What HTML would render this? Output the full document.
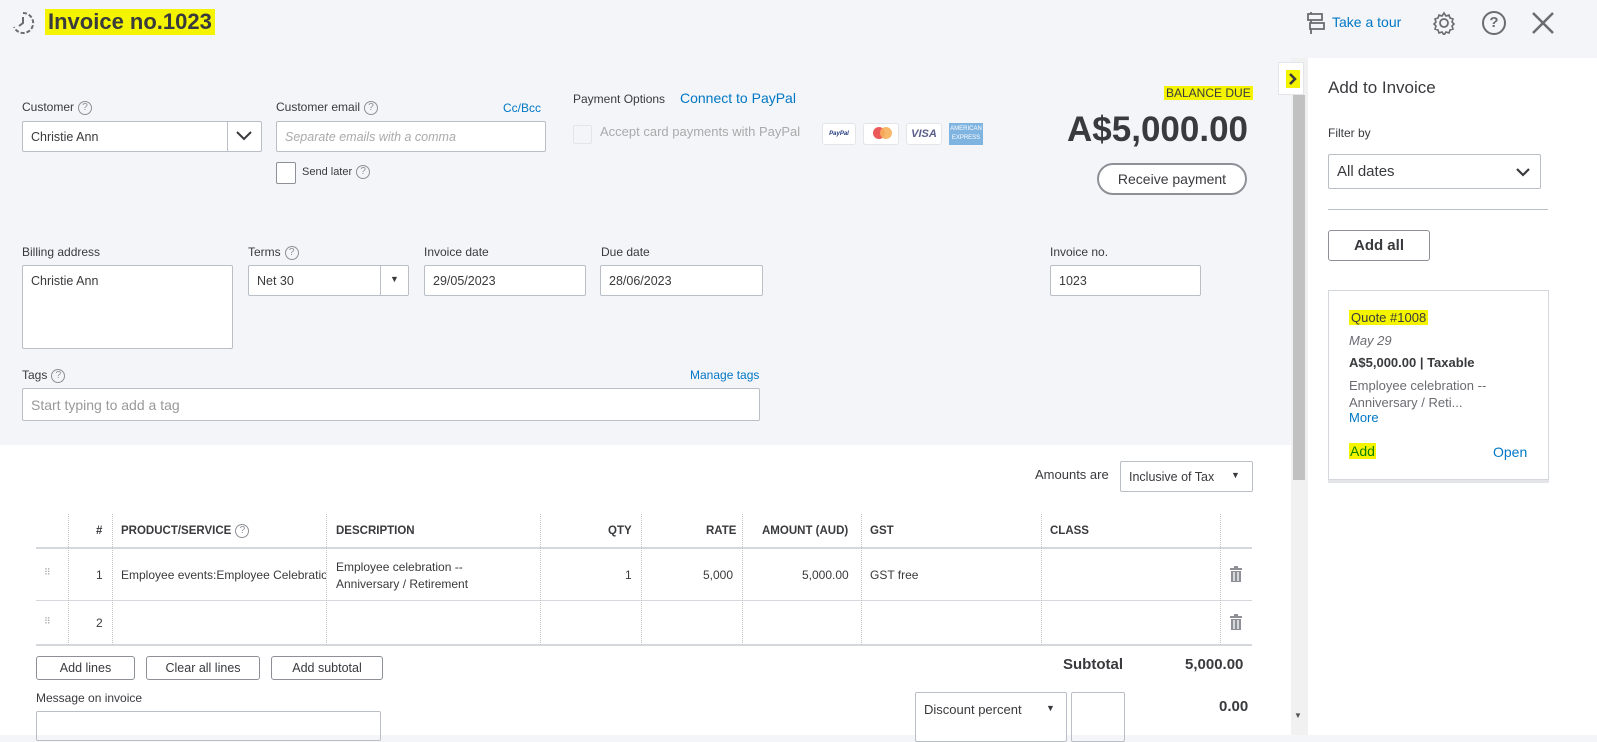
<!DOCTYPE html>
<html><head><style>
*{box-sizing:border-box;margin:0;padding:0}
body{width:1597px;height:735px;overflow:hidden;background:#f4f5f8;font-family:"Liberation Sans",sans-serif;color:#393a3d;position:relative;font-size:12px}
.a{position:absolute}
.lbl{font-size:12px;color:#393a3d}
.inp{position:absolute;background:#fff;border:1px solid #babec5;border-radius:2px;font-size:12.5px;padding:0 8px;display:flex;align-items:center}
.q{display:inline-block;width:14px;height:14px;border:1px solid #8d9096;border-radius:50%;font-size:10px;text-align:center;line-height:12px;color:#8d9096;vertical-align:middle;margin-left:4px}
.blue{color:#0077c5}
.btn{position:absolute;background:#fff;border:1px solid #8d9096;border-radius:3px;font-size:12.5px;text-align:center;color:#393a3d}
.hl{background:#f4f400}
.th{position:absolute;top:514px;height:34px;line-height:34px;font-size:11.5px;font-weight:bold;color:#393a3d}
.vl{position:absolute;border-left:1px dotted #c4c4c4}
.cell{position:absolute;font-size:12px}
.card{position:absolute;width:30px;height:22px;background:#fff;border:1px solid #e3e5e8;border-radius:3px;font-size:8px;text-align:center;line-height:20px}
</style></head><body>
<!-- header -->
<svg class="a" style="left:10px;top:10px" width="26" height="26" viewBox="0 0 26 26"><path d="M13 3a10 10 0 1 1-9 14" fill="none" stroke="#6b6c72" stroke-width="2" stroke-dasharray="4 2"/><path d="M13 7v6l-4 3" fill="none" stroke="#6b6c72" stroke-width="2"/></svg>
<div class="a hl" style="left:45px;top:9px;font-size:22px;font-weight:bold;padding:0 3px;color:#393a3d">Invoice no.1023</div>
<svg class="a" style="left:1305px;top:11px" width="22" height="24" viewBox="0 0 22 24"><rect x="3" y="3" width="14" height="6" fill="none" stroke="#6b6c72" stroke-width="1.8"/><rect x="5" y="12" width="14" height="6" fill="none" stroke="#6b6c72" stroke-width="1.8"/><path d="M6 1v2M6 9v3M6 18v5" stroke="#6b6c72" stroke-width="1.8"/></svg>
<div class="a blue" style="left:1332px;top:14px;font-size:14px">Take a tour</div>
<svg class="a" style="left:1432px;top:11px" width="24" height="24" viewBox="0 0 24 24"><circle cx="12" cy="12" r="4" fill="none" stroke="#6b6c72" stroke-width="1.8"/><path d="M12 2l2 3 3-1 1 3 3 1-1 3 2 2-2 2 1 3-3 1-1 3-3-1-2 3-2-3-3 1-1-3-3-1 1-3-2-2 2-2-1-3 3-1 1-3 3 1z" fill="none" stroke="#6b6c72" stroke-width="1.6"/></svg>
<div class="a" style="left:1482px;top:11px;width:24px;height:24px;border:2px solid #6b6c72;border-radius:50%;text-align:center;font-size:15px;line-height:20px;color:#6b6c72;font-weight:bold">?</div>
<svg class="a" style="left:1531px;top:11px" width="24" height="24"><path d="M2 2l20 20M22 2L2 22" stroke="#6b6c72" stroke-width="2.5"/></svg>

<!-- customer -->
<div class="a lbl" style="left:22px;top:100px">Customer<span class="q">?</span></div>
<div class="inp" style="left:22px;top:121px;width:240px;height:31px">Christie Ann</div>
<div class="a" style="left:227px;top:122px;width:1px;height:29px;background:#babec5"></div>
<svg class="a" style="left:236px;top:130px" width="16" height="12"><path d="M1 2l7 7 7-7" fill="none" stroke="#393a3d" stroke-width="2"/></svg>
<div class="a lbl" style="left:276px;top:100px">Customer email<span class="q">?</span></div>
<div class="a blue" style="left:503px;top:101px;font-size:12px">Cc/Bcc</div>
<div class="inp" style="left:276px;top:121px;width:270px;height:31px;color:#aaa;font-style:italic">Separate emails with a comma</div>
<div class="a" style="left:276px;top:162px;width:20px;height:22px;border:1px solid #8d9096;border-radius:2px;background:#fff"></div>
<div class="a" style="left:302px;top:165px;font-size:11px">Send later<span class="q">?</span></div>

<div class="a" style="left:573px;top:92px;font-size:12px">Payment Options</div>
<div class="a blue" style="left:680px;top:90px;font-size:14px">Connect to PayPal</div>
<div class="a" style="left:573px;top:125px;width:19px;height:19px;border:1px solid #e3e5e8;border-radius:2px;background:#f4f5f8"></div>
<div class="a" style="left:600px;top:124px;font-size:13px;color:#aaa">Accept card payments with PayPal</div>
<div class="card" style="left:822px;top:123px;width:34px;color:#253b80;font-style:italic;font-weight:bold;font-size:6px">PayPal</div>
<div class="card" style="left:863px;top:123px;width:36px"><span style="position:absolute;left:9px;top:3px;width:12px;height:12px;border-radius:50%;background:#eb5a5a"></span><span style="position:absolute;left:16px;top:3px;width:12px;height:12px;border-radius:50%;background:#f7b05a;opacity:.9"></span></div>
<div class="card" style="left:906px;top:123px;width:36px;color:#5a5f8a;font-weight:bold;font-size:11px;font-style:italic">VISA</div>
<div class="a" style="left:949px;top:123px;width:34px;height:22px;background:#7fb3e0;color:#fff;font-size:6px;text-align:center;line-height:9px;padding-top:2px">AMERICAN<br>EXPRESS</div>

<div class="a hl" style="left:1164px;top:86px;font-size:12px;padding:0 2px">BALANCE DUE</div>
<div class="a" style="left:1038px;top:110px;font-size:35px;font-weight:bold;color:#393a3d;width:210px;text-align:right">A$5,000.00</div>
<div class="a" style="left:1097px;top:163px;width:150px;height:32px;border:2px solid #8d9096;border-radius:16px;background:#fff;text-align:center;line-height:28px;font-size:14px">Receive payment</div>

<!-- row 2 -->
<div class="a lbl" style="left:22px;top:245px">Billing address</div>
<div class="inp" style="left:22px;top:265px;width:211px;height:84px;align-items:flex-start;padding-top:8px">Christie Ann</div>
<div class="a lbl" style="left:248px;top:245px">Terms<span class="q">?</span></div>
<div class="inp" style="left:248px;top:265px;width:161px;height:31px">Net 30</div>
<div class="a" style="left:380px;top:266px;width:1px;height:29px;background:#babec5"></div>
<div class="a" style="left:390px;top:274px;font-size:9px">▼</div>
<div class="a lbl" style="left:424px;top:245px">Invoice date</div>
<div class="inp" style="left:424px;top:265px;width:162px;height:31px">29/05/2023</div>
<div class="a lbl" style="left:601px;top:245px">Due date</div>
<div class="inp" style="left:600px;top:265px;width:163px;height:31px">28/06/2023</div>
<div class="a lbl" style="left:1050px;top:245px">Invoice no.</div>
<div class="inp" style="left:1050px;top:265px;width:151px;height:31px">1023</div>
<div class="a lbl" style="left:22px;top:368px">Tags<span class="q">?</span></div>
<div class="a blue" style="left:690px;top:368px;font-size:12px">Manage tags</div>
<div class="inp" style="left:22px;top:388px;width:738px;height:33px;color:#999;font-size:14px">Start typing to add a tag</div>

<!-- white lower -->
<div class="a" style="left:0;top:445px;width:1292px;height:290px;background:#fff"></div>
<div class="a" style="left:1035px;top:467px;font-size:13px">Amounts are</div>
<div class="inp" style="left:1120px;top:461px;width:133px;height:31px;font-size:12.5px">Inclusive of Tax</div>
<div class="a" style="left:1231px;top:470px;font-size:9px">▼</div>

<div class="th" style="left:96px">#</div>
<div class="th" style="left:121px">PRODUCT/SERVICE<span class="q" style="font-weight:normal">?</span></div>
<div class="th" style="left:336px">DESCRIPTION</div>
<div class="th" style="left:608px">QTY</div>
<div class="th" style="left:706px">RATE</div>
<div class="th" style="left:762px">AMOUNT (AUD)</div>
<div class="th" style="left:870px">GST</div>
<div class="th" style="left:1050px">CLASS</div>
<div class="a" style="left:36px;top:547px;width:1216px;height:2px;background:#d4d7dc"></div>
<div class="a" style="left:36px;top:600px;width:1216px;height:1px;background:#d4d7dc"></div>
<div class="a" style="left:36px;top:644px;width:1216px;height:2px;background:#d4d7dc"></div>
<div class="vl" style="left:68px;top:514px;height:131px"></div>
<div class="vl" style="left:112px;top:514px;height:131px"></div>
<div class="vl" style="left:326px;top:514px;height:131px"></div>
<div class="vl" style="left:540px;top:514px;height:131px"></div>
<div class="vl" style="left:641px;top:514px;height:131px"></div>
<div class="vl" style="left:742px;top:514px;height:131px"></div>
<div class="vl" style="left:861px;top:514px;height:131px"></div>
<div class="vl" style="left:1041px;top:514px;height:131px"></div>
<div class="vl" style="left:1220px;top:514px;height:131px"></div>

<div class="cell" style="left:44px;top:567px;color:#aaa;font-size:9px;letter-spacing:-1px">⠿</div>
<div class="cell" style="left:96px;top:568px">1</div>
<div class="cell" style="left:121px;top:568px;width:205px;overflow:hidden;white-space:nowrap">Employee events:Employee Celebration</div>
<div class="cell" style="left:336px;top:559px;line-height:17px">Employee celebration --<br>Anniversary / Retirement</div>
<div class="cell" style="left:625px;top:568px">1</div>
<div class="cell" style="left:703px;top:568px">5,000</div>
<div class="cell" style="left:802px;top:568px">5,000.00</div>
<div class="cell" style="left:870px;top:568px">GST free</div>
<div class="cell" style="left:44px;top:616px;color:#aaa;font-size:9px">⠿</div>
<div class="cell" style="left:96px;top:616px">2</div>
<svg class="a" style="left:1229px;top:566px" width="14" height="17"><path d="M1 3h12M5 1h4" stroke="#8d9096" stroke-width="2"/><rect x="2" y="5" width="10" height="11" fill="#8d9096"/><path d="M5 6v9M9 6v9" stroke="#fff" stroke-width="1.3"/></svg>
<svg class="a" style="left:1229px;top:614px" width="14" height="17"><path d="M1 3h12M5 1h4" stroke="#8d9096" stroke-width="2"/><rect x="2" y="5" width="10" height="11" fill="#8d9096"/><path d="M5 6v9M9 6v9" stroke="#fff" stroke-width="1.3"/></svg>

<div class="btn" style="left:36px;top:656px;width:99px;height:24px;line-height:22px">Add lines</div>
<div class="btn" style="left:146px;top:656px;width:114px;height:24px;line-height:22px">Clear all lines</div>
<div class="btn" style="left:271px;top:656px;width:112px;height:24px;line-height:22px">Add subtotal</div>
<div class="a" style="left:1063px;top:656px;font-size:15px;font-weight:bold">Subtotal</div>
<div class="a" style="left:1185px;top:656px;font-size:15px;font-weight:bold">5,000.00</div>
<div class="a" style="left:36px;top:691px;font-size:12px">Message on invoice</div>
<div class="a" style="left:36px;top:711px;width:345px;height:30px;border:1px solid #babec5;border-radius:2px"></div>
<div class="inp" style="left:915px;top:692px;width:152px;height:50px;align-items:flex-start;padding-top:9px;font-size:13px">Discount percent</div>
<div class="a" style="left:1046px;top:703px;font-size:9px">▼</div>
<div class="a" style="left:1071px;top:692px;width:54px;height:50px;border:1px solid #babec5;border-radius:2px"></div>
<div class="a" style="left:1219px;top:698px;font-size:15px;font-weight:bold">0.00</div>

<!-- scrollbar -->
<div class="a" style="left:1291px;top:58px;width:17px;height:677px;background:#f1f1f1"></div>
<div class="a" style="left:1293px;top:95px;width:12px;height:385px;background:#c1c1c1"></div>
<div class="a" style="left:1294px;top:711px;font-size:8px;color:#555">▼</div>
<div class="a" style="left:1278px;top:62px;width:26px;height:33px;background:#fff;border:1px solid #e3e5e8"></div>
<div class="a hl" style="left:1286px;top:70px;width:14px;height:18px"></div>
<svg class="a" style="left:1288px;top:72px" width="10" height="14"><path d="M2 2l5 5-5 5" fill="none" stroke="#393a3d" stroke-width="2.5"/></svg>

<!-- right panel -->
<div class="a" style="left:1308px;top:58px;width:289px;height:677px;background:#fff"></div>
<div class="a" style="left:1328px;top:78px;font-size:17px">Add to Invoice</div>
<div class="a" style="left:1328px;top:126px;font-size:12px">Filter by</div>
<div class="inp" style="left:1328px;top:154px;width:213px;height:35px;font-size:15px">All dates</div>
<svg class="a" style="left:1516px;top:167px" width="14" height="10"><path d="M1 2l6 6 6-6" fill="none" stroke="#393a3d" stroke-width="2.2"/></svg>
<div class="a" style="left:1328px;top:209px;width:220px;height:1px;background:#babec5"></div>
<div class="btn" style="left:1328px;top:230px;width:102px;height:31px;line-height:29px;font-size:15px;font-weight:bold;border-width:1.5px">Add all</div>
<div class="a" style="left:1328px;top:290px;width:221px;height:190px;border:1px solid #d4d7dc;box-shadow:0 3px 0 #e3e5e8;background:#fff"></div>
<div class="a hl" style="left:1349px;top:310px;font-size:13px;padding:0 2px">Quote #1008</div>
<div class="a" style="left:1349px;top:333px;font-size:13px;font-style:italic;color:#6b6c72">May 29</div>
<div class="a" style="left:1349px;top:355px;font-size:13px;font-weight:bold">A$5,000.00 | Taxable</div>
<div class="a" style="left:1349px;top:377px;font-size:13px;line-height:17px;color:#6b6c72">Employee celebration --<br>Anniversary / Reti...</div>
<div class="a blue" style="left:1349px;top:410px;font-size:13px">More</div>
<div class="a hl" style="left:1349px;top:443px;font-size:14px;color:#108000;padding:0 1px">Add</div>
<div class="a blue" style="left:1493px;top:444px;font-size:14px">Open</div>
</body></html>
